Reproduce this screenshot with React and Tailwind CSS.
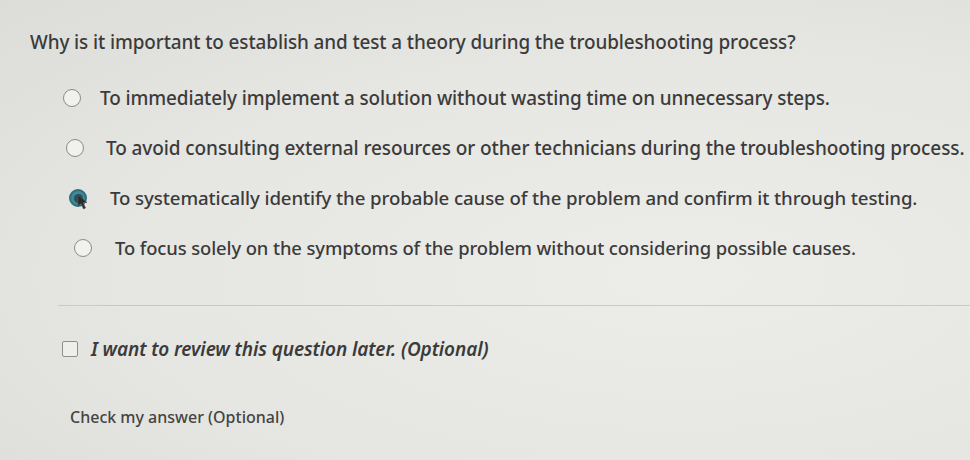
const options = [
  { text: 'To immediately implement a solution without wasting time on unnecessary steps.', indent: 'pl-[63px]', gap: 'gap-[19px]', size: 'text-[18.9px]' },
  { text: 'To avoid consulting external resources or other technicians during the troubleshooting process.', indent: 'pl-[66px]', gap: 'gap-[22px]', size: 'text-[19px]' },
  { text: 'To systematically identify the probable cause of the problem and confirm it through testing.', indent: 'pl-[69px]', gap: 'gap-[23px]', size: 'text-[18.65px]', selected: true },
  { text: 'To focus solely on the symptoms of the problem without considering possible causes.', indent: 'pl-[74px]', gap: 'gap-[23px]', size: 'text-[18.4px]' },
];

function Radio({ selected }) {
  if (!selected) {
    return <span className="block h-[18px] w-[18px] shrink-0 rounded-full border-[1.5px] border-[#8a8a88] bg-[#f1f1ee]" />;
  }
  return (
    <span className="relative block h-[18px] w-[18px] shrink-0">
      <span className="flex h-[18px] w-[18px] items-center justify-center rounded-full border-2 border-[#2f6f7c] bg-[#3f8996]">
        <span className="block h-[9px] w-[9px] rounded-full bg-[#27515a]" />
      </span>
      {/* mouse pointer resting on the radio */}
      <svg className="absolute left-[8px] top-[5px]" width="12" height="16" viewBox="0 0 12 16">
        <path d="M1 1 L1 12 L4 9.5 L6.5 15 L8.5 14 L6 8.5 L10 8.5 Z" fill="#2b2b2b" stroke="#555" strokeWidth="0.6" />
      </svg>
    </span>
  );
}

export default function App() {
  return (
    <div
      className="h-[460px] w-[970px] overflow-hidden bg-[radial-gradient(ellipse_at_70%_60%,#ecece9_0%,#e6e6e2_55%,#dcdcd8_100%)] text-[#3b3b3b]"
      style={{ fontFamily: '"Noto Sans", "Open Sans", sans-serif' }}
    >
      <p className="pl-[30px] pt-[28px] text-[18.9px] font-medium leading-[28px] tracking-[-0.1px]">
        Why is it important to establish and test a theory during the troubleshooting process?
      </p>

      <div className="mt-[17px] flex flex-col">
        {options.map((o) => (
          <div key={o.text} className={`flex h-[50px] items-center ${o.indent} ${o.gap}`}>
            <Radio selected={o.selected} />
            <span className={`${o.size} font-medium tracking-[-0.1px] whitespace-nowrap`}>{o.text}</span>
          </div>
        ))}
      </div>

      <div className="ml-[58px] mt-[32px] h-px bg-[#c9c9c5]" />

      <label className="mt-[29px] flex items-center gap-[13px] pl-[62px]">
        <span className="block h-[16px] w-[16px] rounded-[2px] border-[1.5px] border-[#8f8f8c] bg-[#eeeeeb]" />
        <span className="text-[19px] font-semibold italic tracking-[-0.1px]">I want to review this question later. (Optional)</span>
      </label>

      <p className="mt-[41px] pl-[70px] text-[16px] font-medium text-[#444]">Check my answer (Optional)</p>
    </div>
  );
}
